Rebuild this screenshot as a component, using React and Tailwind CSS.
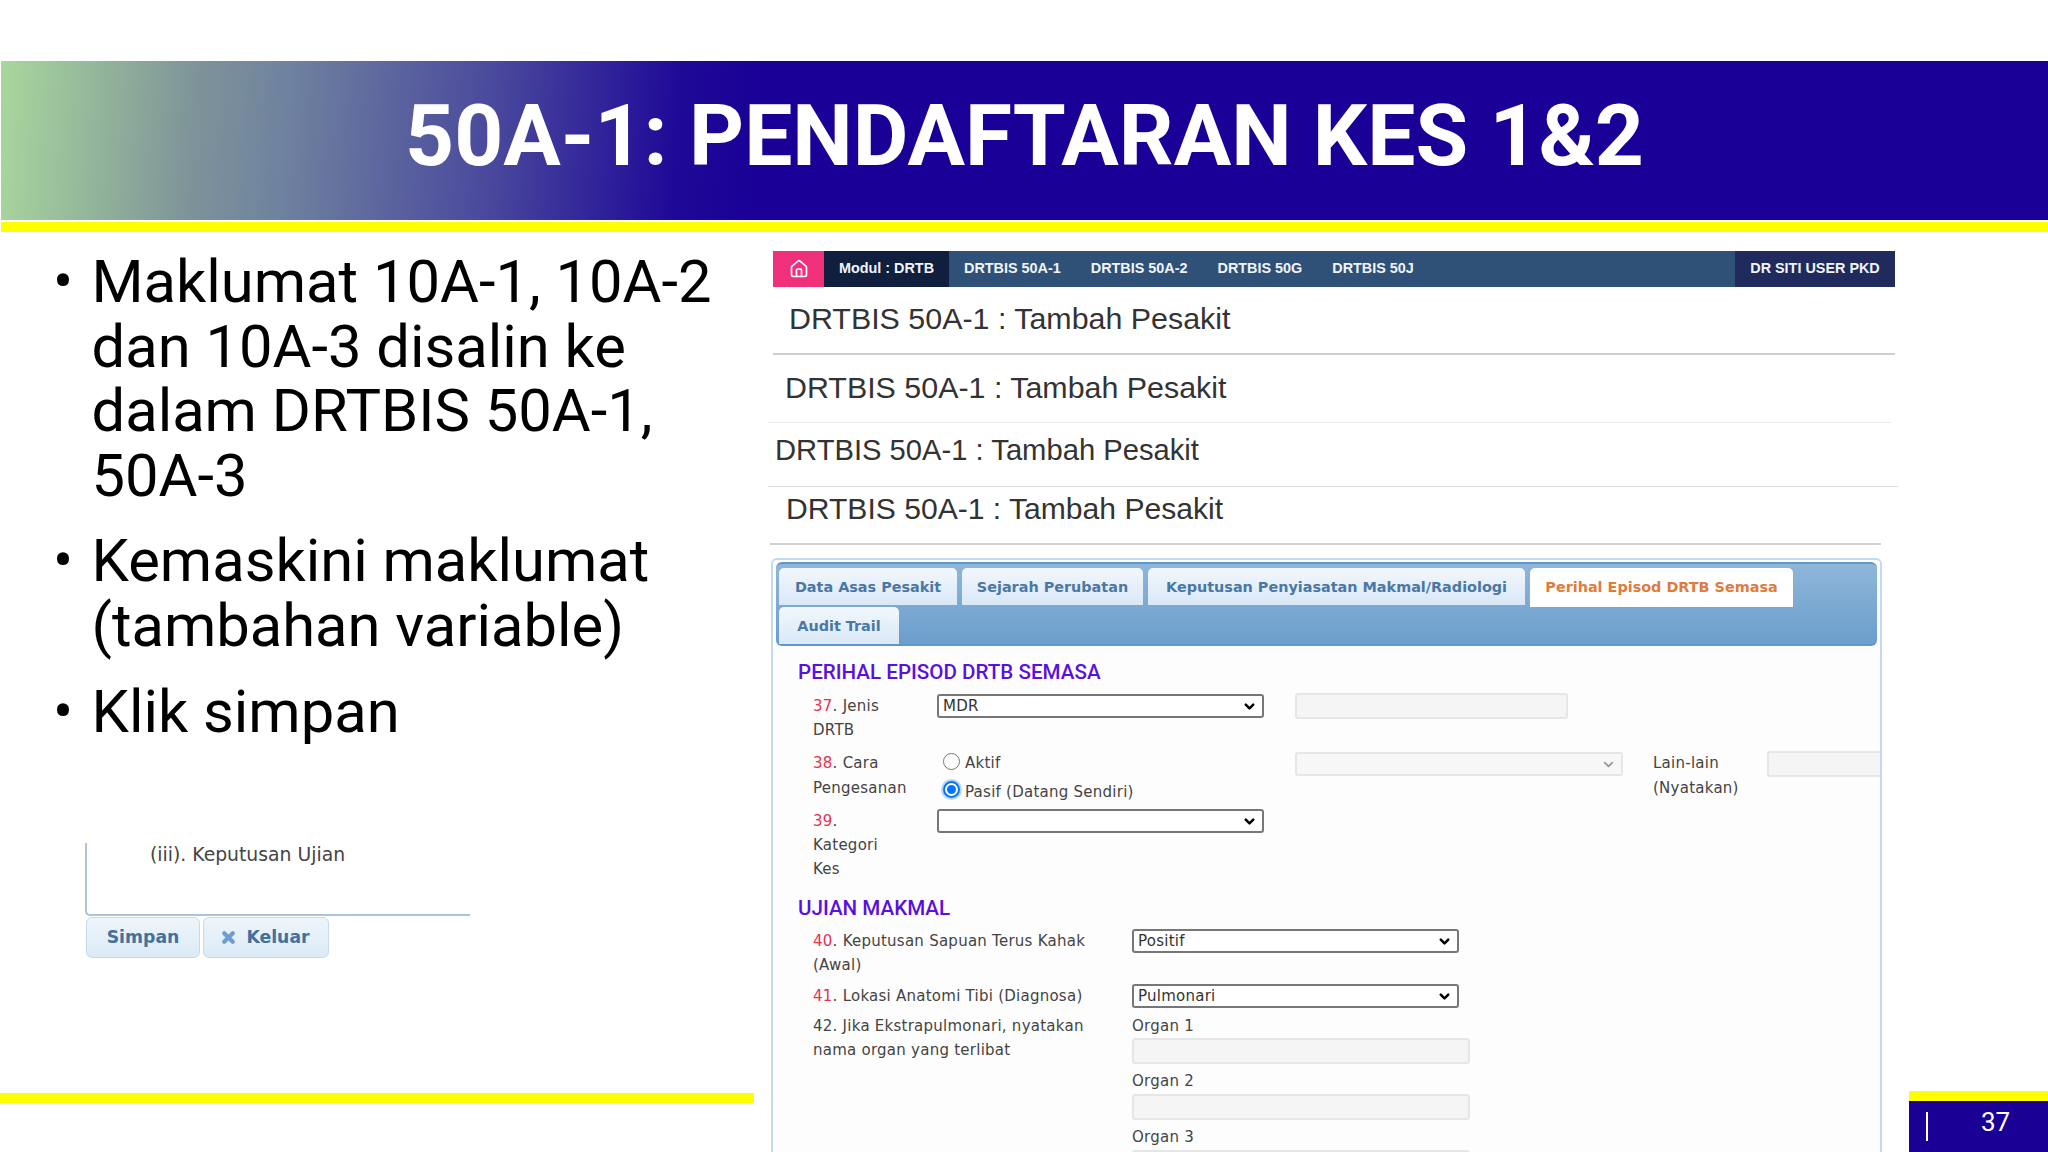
import React from 'react';
import { House, ChevronDown, X } from 'lucide-react';

const navItems = ['DRTBIS 50A-1', 'DRTBIS 50A-2', 'DRTBIS 50G', 'DRTBIS 50J'];

const Bullet = ({ lines, className = '' }) => (
  <div className={`flex ${className}`}>
    <span className="w-[91.5px] shrink-0 pl-[53px]">•</span>
    <p>
      {lines.map((line) => (
        <span key={line} className="block">{line}</span>
      ))}
    </p>
  </div>
);

const Select = ({ value, className = '' }) => (
  <div className={`flex h-[24px] items-center justify-between rounded-[3px] border-2 border-[#777] bg-white pl-[4px] pr-[5px] text-[#333] ${className}`}>
    <span>{value}</span>
    <ChevronDown size={15} strokeWidth={4} className="text-black" />
  </div>
);

const Disabled = ({ className = '' }) => (
  <div className={`h-[26px] rounded-[3px] border-2 border-[#e6e6e6] bg-[#f5f5f5] ${className}`} />
);

const Num = ({ n }) => <span className="text-[#e5334f]">{n}</span>;

const Tab = ({ children, className = '' }) => (
  <div className={`flex h-[37px] items-center justify-center rounded-t-[5px] bg-gradient-to-b from-[#f2f7fc] to-[#d9e8f6] text-[#4a78a5] ${className}`}>
    {children}
  </div>
);

const Heading = ({ className, children }) => (
  <div className={`font-['Liberation_Sans',sans-serif] leading-[40px] text-[#333] ${className}`}>{children}</div>
);

export default function App() {
  return (
    <div className="flex h-[1152px] w-[2048px] flex-col overflow-hidden bg-white pt-[61px] font-['Roboto',sans-serif]">
      <header className="ml-[1px] flex h-[159px] shrink-0 items-center justify-center bg-[linear-gradient(94deg,#a9d79d_0%,#7e9499_9.5%,#6f829f_14%,#4a499d_24%,#1f0a97_33%,#1a0096_37%,#1a0096_100%)] pb-[8px]">
        <h1 className="text-[85.6px] font-bold leading-none text-white">50A-1: PENDAFTARAN KES 1&amp;2</h1>
      </header>
      <div className="mt-[2px] ml-[1px] h-[10px] shrink-0 bg-[#ffff00]" />

      <div className="flex min-h-0 flex-1">
        {/* left column: slide text and the clipped screenshot */}
        <div className="flex w-[768px] shrink-0 flex-col pt-[18px]">
          <div className="text-[59.7px] leading-[64.5px] text-black">
            <Bullet lines={['Maklumat 10A-1, 10A-2', 'dan 10A-3 disalin ke', 'dalam DRTBIS 50A-1,', '50A-3']} />
            <Bullet className="mt-[21px]" lines={['Kemaskini maklumat', '(tambahan variable)']} />
            <Bullet className="mt-[22px]" lines={['Klik simpan']} />
          </div>

          <div className="ml-[85px] mt-[98px] h-[73px] w-[385px] rounded-bl-[5px] border-b-2 border-l-2 border-[#a9c4dc] pl-[63px] font-['DejaVu_Sans',sans-serif] text-[18.8px] leading-[24px] text-[#444]">
            (iii). Keputusan Ujian
          </div>
          <div className="ml-[86px] mt-[1px] flex gap-[3px] font-['DejaVu_Sans',sans-serif] text-[17.3px] font-bold text-[#44709c]">
            <div className="flex h-[41px] w-[114px] items-center justify-center rounded-[6px] border border-[#c5dbec] bg-gradient-to-b from-[#eef5fb] to-[#dceaf6] pt-[1px]">Simpan</div>
            <div className="flex h-[41px] w-[126px] items-center justify-center gap-[9px] rounded-[6px] border border-[#c5dbec] bg-gradient-to-b from-[#eef5fb] to-[#dceaf6] pr-[2px] pt-[1px]">
              <X size={17} strokeWidth={6} className="text-[#6e9ecf]" />
              Keluar
            </div>
          </div>

          <div className="mb-[49px] mt-auto h-[10px] w-[754px] bg-[#ffff00]" />
        </div>

        {/* right column: pasted system screens */}
        <div className="flex w-[1130px] shrink-0 flex-col pt-[19px]">
          <nav className="ml-[5px] flex h-[36px] w-[1122px] shrink-0 items-center bg-[#2f5178] font-['Liberation_Sans',sans-serif] text-[14.4px] font-bold text-[#f1f4f8]">
            <div className="flex h-full w-[51px] items-center justify-center bg-[#f0307a]">
              <House size={20} className="text-white" strokeWidth={2} />
            </div>
            <div className="flex h-full w-[125px] items-center justify-center bg-[#0f1f3d]">Modul : DRTB</div>
            {navItems.map((item) => (
              <div key={item} className="px-[15px]">{item}</div>
            ))}
            <div className="ml-auto flex h-full w-[160px] items-center justify-center bg-[#202a5c]">DR SITI USER PKD</div>
          </nav>

          <Heading className="ml-[5px] h-[68px] w-[1122px] shrink-0 border-b-2 border-[#cfcfcf] pl-[16px] pt-[11px] text-[30.4px]">DRTBIS 50A-1 : Tambah Pesakit</Heading>
          <Heading className="h-[68px] w-[1124px] shrink-0 border-b border-[#ededed] pl-[17px] pt-[12px] text-[30.4px]">DRTBIS 50A-1 : Tambah Pesakit</Heading>
          <Heading className="h-[64px] w-[1130px] shrink-0 border-b border-[#dedede] pl-[7px] pt-[7px] text-[29.2px]">DRTBIS 50A-1 : Tambah Pesakit</Heading>
          <Heading className="ml-[2px] h-[58px] w-[1111px] shrink-0 border-b-2 border-[#d2d2d2] pl-[16px] pt-[2px] text-[30.1px]">DRTBIS 50A-1 : Tambah Pesakit</Heading>

          <section className="ml-[3px] mt-[13px] min-h-0 w-[1111px] flex-1 overflow-hidden rounded-t-[6px] border-2 border-b-0 border-[#c3d9ef] bg-[#fdfdfd] font-['DejaVu_Sans',sans-serif] text-[15px] leading-[24px] tracking-[0.25px] text-[#444]">
            <div className="mx-[3px] mt-[2px] h-[84px] rounded-[6px] border-t-2 border-b-2 border-[#5f97c9] bg-gradient-to-b from-[#8fb6d9] to-[#6b9ecc] pl-[3px] pt-[4px] text-[14.4px] font-bold tracking-normal">
              <div className="flex gap-[5px]">
                <Tab className="w-[178px]">Data Asas Pesakit</Tab>
                <Tab className="w-[181px]">Sejarah Perubatan</Tab>
                <Tab className="w-[377px]">Keputusan Penyiasatan Makmal/Radiologi</Tab>
                <div className="flex h-[39px] w-[263px] items-center justify-center rounded-t-[5px] bg-white pb-[2px] text-[#e07b3c]">Perihal Episod DRTB Semasa</div>
              </div>
              <Tab className="w-[120px]">Audit Trail</Tab>
            </div>

            <h2 className="ml-[25px] mt-[14px] font-['Roboto',sans-serif] text-[20.6px] font-medium leading-[24px] tracking-normal text-[#5a10e0]">PERIHAL EPISOD DRTB SEMASA</h2>

            <div className="ml-[40px] mt-[10px] flex h-[48px]">
              <div className="w-[124px] shrink-0"><Num n="37" />. Jenis<br />DRTB</div>
              <Select value="MDR" className="w-[327px]" />
              <Disabled className="ml-[31px] w-[273px] -mt-[1px]" />
            </div>

            <div className="ml-[40px] mt-[9px] flex h-[50px] leading-[25px]">
              <div className="w-[124px] shrink-0"><Num n="38" />. Cara<br />Pengesanan</div>
              <div className="w-[327px] shrink-0 pl-[6px]">
                <div className="flex h-[25px] items-center gap-[5px]">
                  <span className="mb-[4px] h-[17px] w-[17px] rounded-full border border-[#767676] bg-white" />
                  Aktif
                </div>
                <div className="mt-[1px] flex h-[25px] items-center gap-[5px]">
                  <span className="flex h-[17px] w-[17px] items-center justify-center rounded-full border-2 border-[#0075ff] bg-white ring-2 ring-[#bcd6f5]">
                    <span className="h-[9px] w-[9px] rounded-full bg-[#0075ff]" />
                  </span>
                  <span className="pt-[5px]">Pasif (Datang Sendiri)</span>
                </div>
              </div>
              <div className="ml-[31px] mt-[1px] flex h-[24px] w-[328px] shrink-0 items-center justify-end rounded-[3px] border-2 border-[#e6e6e6] bg-[#f7f7f7] pr-[5px]">
                <ChevronDown size={15} strokeWidth={3} className="text-[#999]" />
              </div>
              <div className="ml-[30px] w-[114px] shrink-0">Lain-lain<br />(Nyatakan)</div>
              <Disabled className="-mr-[30px] h-[26px] w-[140px] shrink-0" />
            </div>

            <div className="ml-[40px] mt-[8px] flex h-[72px]">
              <div className="w-[124px] shrink-0"><Num n="39" />.<br />Kategori<br />Kes</div>
              <Select value="" className="w-[327px]" />
            </div>

            <h2 className="ml-[25px] mt-[15px] font-['Roboto',sans-serif] text-[20.6px] font-medium leading-[24px] tracking-normal text-[#5a10e0]">UJIAN MAKMAL</h2>

            <div className="ml-[40px] mt-[9px] flex h-[48px]">
              <div className="w-[319px] shrink-0"><Num n="40" />. Keputusan Sapuan Terus Kahak<br />(Awal)</div>
              <Select value="Positif" className="w-[327px]" />
            </div>

            <div className="ml-[40px] mt-[7px] flex h-[24px]">
              <div className="w-[319px] shrink-0"><Num n="41" />. Lokasi Anatomi Tibi (Diagnosa)</div>
              <Select value="Pulmonari" className="w-[327px]" />
            </div>

            <div className="ml-[40px] mt-[6px] flex">
              <div className="w-[319px] shrink-0">42. Jika Ekstrapulmonari, nyatakan<br />nama organ yang terlibat</div>
              <div className="w-[338px] shrink-0">
                <div>Organ 1</div>
                <Disabled />
                <div className="mt-[5px]">Organ 2</div>
                <Disabled className="mt-[1px]" />
                <div className="mt-[5px]">Organ 3</div>
                <Disabled className="mt-[1px]" />
              </div>
            </div>
          </section>
        </div>

        {/* page number */}
        <div className="ml-[11px] flex-1 self-end">
          <div className="h-[10px] bg-[#ffff00]" />
          <div className="flex h-[51px] items-center bg-[#1b0096] pl-[17px] text-white">
            <span className="h-[29px] w-[2px] bg-white" />
            <span className="mb-[10px] ml-[53px] text-[26px] leading-none">37</span>
          </div>
        </div>
      </div>
    </div>
  );
}
